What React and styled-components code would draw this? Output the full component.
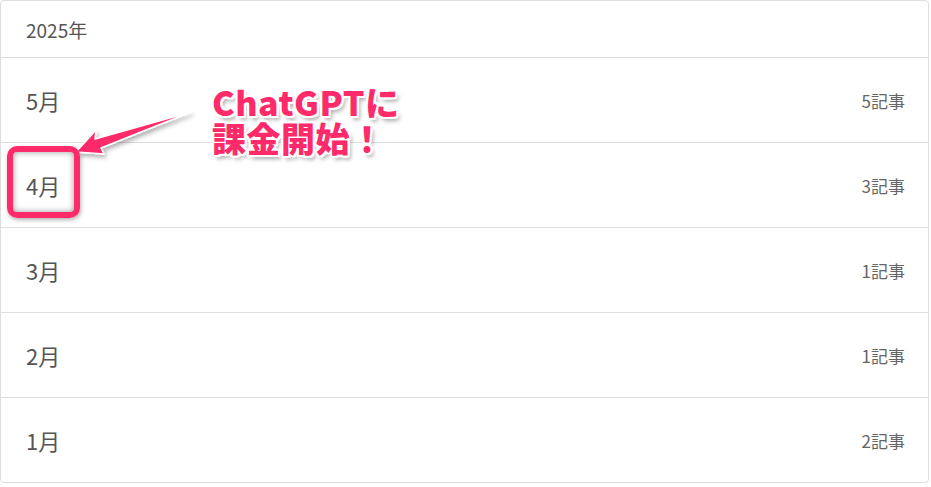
import styled, { createGlobalStyle } from 'styled-components';

const GlobalStyle = createGlobalStyle`
  body {
    margin: 0;
    background: #fff;
    font-family: "Noto Sans CJK JP", "Noto Sans", sans-serif;
  }
`;

const months = [
  { label: '5月', count: 5 },
  { label: '4月', count: 3 },
  { label: '3月', count: 1 },
  { label: '2月', count: 1 },
  { label: '1月', count: 2 },
];

const Page = styled.div`
  position: relative;
  width: 931px;
  height: 487px;
`;

const Card = styled.div`
  width: 929px;
  box-sizing: border-box;
  border: 1px solid #dddddd;
  border-radius: 4px;
  overflow: hidden;
`;

const YearHeader = styled.div`
  height: 56px;
  display: flex;
  align-items: center;
  padding: 0 25px;
  font-size: 19px;
  color: #555;
  border-bottom: 1px solid #dddddd;
`;

const MonthRow = styled.div`
  height: 84px;
  display: flex;
  align-items: center;
  justify-content: space-between;
  padding: 0 23px 0 25px;
  color: #555;
  border-bottom: ${(p) => (p.$last ? 'none' : '1px solid #dddddd')};
`;

const MonthLabel = styled.span`
  font-size: 22px;
`;

const Count = styled.span`
  font-size: 17px;
  color: #666;
`;

const Highlight = styled.div`
  position: absolute;
  left: 7px;
  top: 146px;
  width: 73px;
  height: 72px;
  box-sizing: border-box;
  border: 6px solid #ff2a6a;
  border-radius: 10px;
  box-shadow: inset 0 0 6px rgba(0, 0, 0, 0.4), 1px 2px 4px rgba(0, 0, 0, 0.3);
`;

const Note = styled.div`
  position: absolute;
  left: 212px;
  top: 84px;
  font-size: 34px;
  line-height: 36px;
  font-weight: 900;
  color: #ff2a6a;
  letter-spacing: 0.5px;
  text-shadow:
    -2px -2px 0 #fff, 2px -2px 0 #fff, -2px 2px 0 #fff, 2px 2px 0 #fff,
    0 -2px 0 #fff, 0 2px 0 #fff, -2px 0 0 #fff, 2px 0 0 #fff,
    3px 4px 4px rgba(0, 0, 0, 0.35);
`;

const ArrowSvg = styled.svg`
  position: absolute;
  left: 0;
  top: 0;
  pointer-events: none;
`;

const Arrow = () => (
  <ArrowSvg width="931" height="487" viewBox="0 0 931 487">
    <defs>
      <filter id="sh" x="-20%" y="-20%" width="140%" height="140%">
        <feDropShadow dx="2" dy="3" stdDeviation="2" floodColor="#000" floodOpacity="0.3" />
      </filter>
    </defs>
    <polygon
      points="76,152 96,130 95,139 191,112 101,148 104,154"
      fill="#ff2a6a"
      stroke="#fff"
      strokeWidth="1.5"
      strokeLinejoin="round"
      filter="url(#sh)"
    />
  </ArrowSvg>
);

export default function App() {
  return (
    <Page>
      <GlobalStyle />
      <Card>
        <YearHeader>2025年</YearHeader>
        {months.map((m, i) => (
          <MonthRow key={m.label} $last={i === months.length - 1}>
            <MonthLabel>{m.label}</MonthLabel>
            <Count>{m.count}記事</Count>
          </MonthRow>
        ))}
      </Card>
      <Arrow />
      <Highlight />
      <Note>
        ChatGPTに
        <br />
        課金開始！
      </Note>
    </Page>
  );
}
